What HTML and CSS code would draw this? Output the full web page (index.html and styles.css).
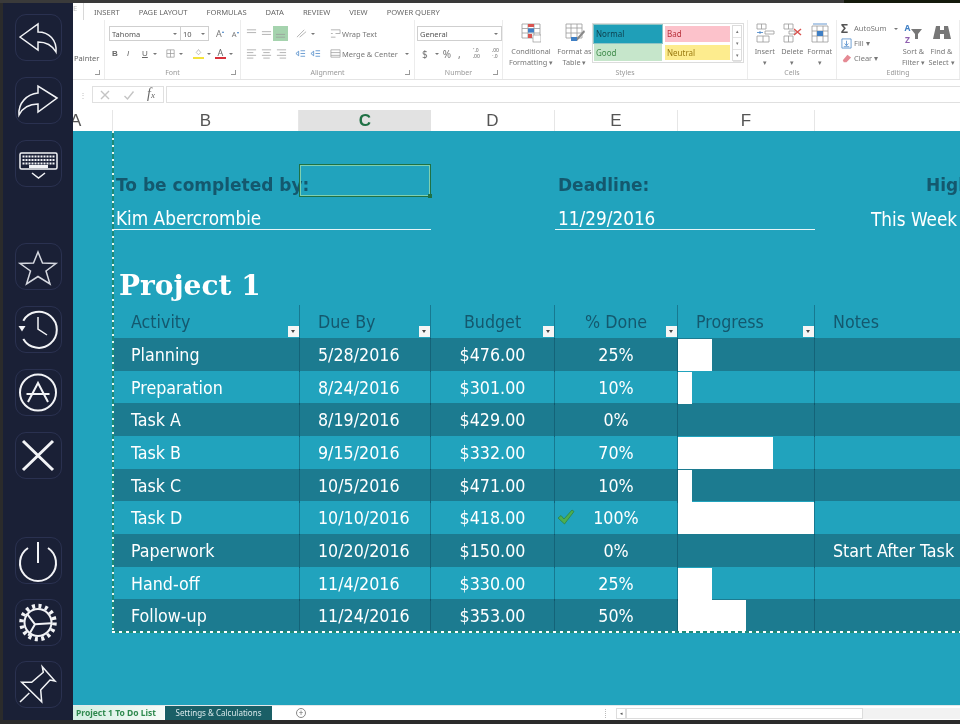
FILE: index.html
```html
<!DOCTYPE html>
<html lang="en">
<head>
    <meta charset="UTF-8">
    <meta name="viewport" content="width=device-width, initial-scale=1.0">
    <title>Project 1 To Do List</title>
    <link rel="stylesheet" href="styles.css">
</head>
<body>
<div class="app">
    <nav class="sidebar">
        <div class="side-group">
            <button class="side-btn"><svg viewBox="1 1 45 45"><path d="M5 23 L23 10 V18 C34 18 42 26 41 38 C37 31 31 28 23 28 V36 Z"/></svg></button>
            <button class="side-btn"><svg viewBox="1 1 45 45"><path d="M42 21 L23 9 V16 C12 17 3 26 4 38 C8 30 14 27 23 27 V35 Z"/></svg></button>
            <button class="side-btn"><svg viewBox="1 1 45 45">
                <rect x="5" y="13" width="37" height="16" rx="1.5"/>
                <path class="keys" d="M7.5 16.5 H39.5 M7.5 20 H39.5 M7.5 23.5 H39.5"/>
                <path class="thick" d="M14 26.5 H33"/>
                <path d="M17 33 L23.5 38 L30 33"/>
            </svg></button>
        </div>
        <div class="side-group">
            <button class="side-btn"><svg viewBox="1 1 45 45"><path class="soft" d="M23 9 L27.5 20 L41 20.5 L31 28 L35 41 L23 33.5 L11.5 41 L15.5 28 L5 20.5 L18.5 20 Z"/></svg></button>
            <button class="side-btn"><svg viewBox="1 1 45 45">
                <path class="med" d="M8.3 14.7 A18 18 0 1 1 8.3 33"/>
                <path class="solid" d="M3.5 20 H10.5 L7 25.5 Z"/>
                <path d="M23 11 V23 L32 29"/>
            </svg></button>
            <button class="side-btn"><svg viewBox="1 1 45 45">
                <circle class="med" cx="23" cy="23.5" r="18"/>
                <path class="med" d="M13 33 L23 14 L33 33 M11.5 25 H34.5"/>
            </svg></button>
            <button class="side-btn"><svg viewBox="1 1 45 45"><path class="thick" d="M8 9 L38 38 M38 9 L8 38"/></svg></button>
        </div>
        <div class="side-group tight">
            <button class="side-btn"><svg viewBox="1 1 45 45">
                <path class="med" d="M13 11 A18 18 0 1 0 33 11"/>
                <path class="med" d="M23 5 V26"/>
            </svg></button>
            <button class="side-btn"><svg viewBox="1 1 45 45">
                <circle class="teeth" cx="23" cy="23.5" r="16.5"/>
                <circle class="med" cx="23" cy="23.5" r="13.5"/>
                <path class="med" d="M20 25.3 L11.7 14.3 M20 25.3 L36 24.3 M20 25.3 L13.3 36.7"/>
            </svg></button>
            <button class="side-btn"><svg viewBox="1 1 45 45">
                <path d="M27.3 5.7 L40 20 L35 19 L25.7 29 L26.7 40.7 L6.7 21.3 L16.7 21.3 L28.3 11.3 Z"/>
                <path d="M14.3 32 L5 41"/>
            </svg></button>
        </div>
    </nav>

    <main class="main">
        <div class="tabs">
            <span class="tab-home">E</span>
            <span>INSERT</span><span>PAGE LAYOUT</span><span>FORMULAS</span><span>DATA</span><span>REVIEW</span><span>VIEW</span><span>POWER QUERY</span>
        </div>

        <div class="ribbon">
            <section class="group g-clip">
                <div class="group-body"><span class="painter">Painter</span></div>
                <div class="group-label"><i class="launcher"></i></div>
            </section>

            <section class="group g-font">
                <div class="group-body tools">
                    <div class="tool-row">
                        <span class="combo c-font">Tahoma<i class="caret"></i></span><span class="combo c-size">10<i class="caret"></i></span>
                        <span class="grow-a">A<sup>▴</sup></span><span class="shrink-a">A<sup>▾</sup></span>
                    </div>
                    <div class="tool-row fmt">
                        <b>B</b><em>I</em><u>U</u><i class="caret"></i>
                        <svg class="ico" viewBox="0 0 12 12"><path class="ln" d="M2 2 H10 V10 H2 Z M6 2 V10 M2 6 H10"/></svg><i class="caret"></i>
                        <span class="paint"><svg class="ico" viewBox="0 0 12 12"><path class="ln" d="M3 6 L6 2 L9 6 L6 9 Z"/></svg><i class="swatch s-yellow"></i></span><i class="caret"></i>
                        <span class="paint p2"><span class="font-a">A</span><i class="swatch s-red"></i></span><i class="caret"></i>
                    </div>
                </div>
                <div class="group-label">Font<i class="launcher"></i></div>
            </section>

            <section class="group g-align">
                <div class="group-body tools">
                    <div class="tool-row">
                        <svg class="ico" viewBox="0 0 12 12"><path class="ln" d="M1 2 H11 M1 5 H11"/></svg>
                        <svg class="ico" viewBox="0 0 12 12"><path class="ln" d="M1 4 H11 M1 7 H11"/></svg>
                        <span class="active"><svg class="ico" viewBox="0 0 12 12"><path class="ln" d="M1 7 H11 M1 10 H11"/></svg></span>
                        <svg class="ico orient" viewBox="0 0 12 12"><path class="ln" d="M1 10 L9 2 M4 10 L11 4"/></svg><i class="caret"></i>
                        <span class="with-ico wrap"><svg class="ico" viewBox="0 0 12 12"><path class="ln" d="M1 2 H11 V6 H6 M1 6 H3 M1 10 H6"/></svg>Wrap Text</span>
                    </div>
                    <div class="tool-row">
                        <svg class="ico" viewBox="0 0 12 12"><path class="ln" d="M1 2 H11 M1 5 H8 M1 8 H11 M1 11 H8"/></svg>
                        <svg class="ico" viewBox="0 0 12 12"><path class="ln" d="M1 2 H11 M2.5 5 H9.5 M1 8 H11 M2.5 11 H9.5"/></svg>
                        <svg class="ico" viewBox="0 0 12 12"><path class="ln" d="M1 2 H11 M4 5 H11 M1 8 H11 M4 11 H11"/></svg>
                        <svg class="ico orient" viewBox="0 0 12 12"><path class="ln-blue" d="M1 6 L4 3.5 V8.5 Z M6 3 H11 M6 6 H11 M6 9 H11"/></svg>
                        <svg class="ico" viewBox="0 0 12 12"><path class="ln-blue" d="M1 6 L4 3.5 V8.5 Z M6 3 H11 M6 6 H11 M6 9 H11"/></svg>
                        <span class="with-ico merge"><svg class="ico" viewBox="0 0 12 12"><path class="ln" d="M1 2 H11 V10 H1 Z M1 5 H11 M1 8 H11"/></svg>Merge &amp; Center<i class="caret"></i></span>
                    </div>
                </div>
                <div class="group-label">Alignment<i class="launcher"></i></div>
            </section>

            <section class="group g-number">
                <div class="group-body tools">
                    <div class="tool-row"><span class="combo c-number">General<i class="caret"></i></span></div>
                    <div class="tool-row num-fmt">
                        <span class="big">$</span><i class="caret"></i><span class="big pct">%</span><span class="big">,</span>
                        <span class="dec">⁺.0<br>.00</span><span class="dec">.00<br>⁻.0</span>
                    </div>
                </div>
                <div class="group-label">Number<i class="launcher"></i></div>
            </section>

            <section class="group g-styles">
                <div class="group-body styles-body">
                    <div class="big-tool t-cond">
                        <svg viewBox="0 0 20 20" class="big-ico"><path class="ln" d="M1 1 H19 V15 H1 Z M7 1 V15 M13 1 V15 M1 5.5 H19 M1 10 H19"/><rect x="7" y="1" width="6" height="3" fill="#d9534f"/><rect x="7" y="5.5" width="6" height="4" fill="#3f7fc4"/><rect x="7" y="11" width="4" height="4" fill="#d9534f"/><rect x="12" y="12" width="8" height="7" fill="#fff" stroke="#888" stroke-width=".6"/></svg>
                        <span>Conditional<br>Formatting ▾</span>
                    </div>
                    <div class="big-tool t-table">
                        <svg viewBox="0 0 20 20" class="big-ico"><path class="ln" d="M1 1 H17 V15 H1 Z M6 1 V15 M12 1 V15 M1 5 H17 M1 10 H17"/><path d="M10 17 L19 7 L20 9 L12 18 Z" fill="#888"/><rect x="6" y="14" width="6" height="4" fill="#3f7fc4"/></svg>
                        <span>Format as<br>Table ▾</span>
                    </div>
                    <div class="gallery">
                        <div class="style-grid">
                            <span class="st-normal">Normal</span><span class="st-bad">Bad</span>
                            <span class="st-good">Good</span><span class="st-neutral">Neutral</span>
                        </div>
                        <div class="gallery-scroll"><i>▴</i><i>▾</i><i>▾</i></div>
                    </div>
                </div>
                <div class="group-label">Styles</div>
            </section>

            <section class="group g-cells">
                <div class="group-body cells-body">
                    <div class="big-tool">
                        <svg viewBox="0 0 20 20" class="big-ico"><path class="ln" d="M2 1 H11 V6 H2 Z M6.5 1 V6 M2 13 H14 V19 H2 Z M8 13 V19 M10 8 H19 V11 H10 Z"/><path class="ln-blue" d="M2 9.5 H8 M5 8 V11"/></svg>
                        <span>Insert<br>▾</span>
                    </div>
                    <div class="big-tool">
                        <svg viewBox="0 0 20 20" class="big-ico"><path class="ln" d="M2 1 H11 V6 H2 Z M6.5 1 V6 M2 13 H11 V19 H2 Z M6.5 13 V19 M7 8 H13 V11 H7 Z"/><path class="ln-red" d="M12 6 L19 12 M19 6 L12 12"/></svg>
                        <span>Delete<br>▾</span>
                    </div>
                    <div class="big-tool">
                        <svg viewBox="0 0 20 20" class="big-ico"><path class="ln" d="M2 3 H18 V19 H2 Z M2 8 H18 M7 3 V19 M13 3 V19 M2 13 H18"/><rect x="7" y="8" width="6" height="5" fill="#3f7fc4"/><path class="ln-blue" d="M3 1 H17"/></svg>
                        <span>Format<br>▾</span>
                    </div>
                </div>
                <div class="group-label">Cells</div>
            </section>

            <section class="group g-edit">
                <div class="group-body edit-body">
                    <div class="edit-list">
                        <span><em class="sigma">Σ</em>AutoSum<i class="caret far"></i></span>
                        <span><svg class="ico" viewBox="0 0 12 12"><path class="ln-blue" d="M1 1 H11 V11 H1 Z M6 3 V8 M4 6 L6 8.5 L8 6 M3 9.5 H9"/></svg>Fill ▾</span>
                        <span><svg class="ico" viewBox="0 0 12 12"><path d="M2 8 L7 2 L11 5 L6 10 H3 Z" fill="#e58a94"/></svg>Clear ▾</span>
                    </div>
                    <div class="big-tool t-sort">
                        <span class="sort-ico">
                            <span class="az"><span class="az-a">A</span><span class="az-z">Z</span></span>
                            <svg viewBox="0 0 11 10" class="funnel"><path d="M0 0 H11 L7 5 V10 H4 V5 Z" fill="#777"/></svg>
                        </span>
                        <span>Sort &amp;<br>Filter ▾</span>
                    </div>
                    <div class="big-tool t-find">
                        <svg viewBox="0 0 20 20" class="big-ico"><path d="M4 3 H8 V7 H12 V3 H16 L19 16 H12 V11 H8 V16 H1 Z" fill="#777"/></svg>
                        <span>Find &amp;<br>Select ▾</span>
                    </div>
                </div>
                <div class="group-label">Editing</div>
            </section>
        </div>

        <div class="formula-bar">
            <span class="grip">⋮</span>
            <div class="fx-box">
                <svg class="fx-ico" viewBox="0 0 12 12"><path class="ln-pale" d="M2 2 L10 10 M10 2 L2 10"/></svg>
                <svg class="fx-ico" viewBox="0 0 12 12"><path class="ln-pale" d="M1.5 7 L4.5 10 L10.5 2.5"/></svg>
                <span class="fx">f<sub>x</sub></span>
            </div>
            <div class="fx-input"></div>
        </div>

        <div class="col-heads cols">
            <span class="col-a">A</span><span>B</span><span class="current">C</span><span>D</span><span>E</span><span>F</span><span class="col-g">G</span>
        </div>

        <div class="sheet">
            <div class="print-area">
                <div class="top-row cols">
                    <span class="label">To be completed by:</span>
                    <span class="selected"><i class="handle"></i></span>
                    <span></span>
                    <span class="label">Deadline:</span>
                    <span></span>
                    <span class="label high">High</span>
                </div>
                <div class="top-row cols values">
                    <span class="value">Kim Abercrombie</span>
                    <span class="value"></span>
                    <span></span>
                    <span class="value">11/29/2016</span>
                    <span class="value"></span>
                    <span class="week">This Week</span>
                </div>
                <h1>Project 1</h1>

                <div class="row head cols">
                    <span class="cell pad">Activity<i class="filter"></i></span>
                    <span class="cell pad">Due By<i class="filter"></i></span>
                    <span class="cell mid">Budget<i class="filter"></i></span>
                    <span class="cell mid">% Done<i class="filter"></i></span>
                    <span class="cell pad">Progress<i class="filter"></i></span>
                    <span class="cell pad">Notes</span>
                </div>
                <div class="row dark cols">
                    <span class="cell pad">Planning</span><span class="cell pad">5/28/2016</span><span class="cell mid">$476.00</span><span class="cell mid">25%</span>
                    <span class="cell bar-cell"><i class="bar" style="width:25%"></i></span><span class="cell pad"></span>
                </div>
                <div class="row cols">
                    <span class="cell pad">Preparation</span><span class="cell pad">8/24/2016</span><span class="cell mid">$301.00</span><span class="cell mid">10%</span>
                    <span class="cell bar-cell"><i class="bar" style="width:10%"></i></span><span class="cell pad"></span>
                </div>
                <div class="row dark cols">
                    <span class="cell pad">Task A</span><span class="cell pad">8/19/2016</span><span class="cell mid">$429.00</span><span class="cell mid">0%</span>
                    <span class="cell bar-cell"></span><span class="cell pad"></span>
                </div>
                <div class="row cols">
                    <span class="cell pad">Task B</span><span class="cell pad">9/15/2016</span><span class="cell mid">$332.00</span><span class="cell mid">70%</span>
                    <span class="cell bar-cell"><i class="bar" style="width:70%"></i></span><span class="cell pad"></span>
                </div>
                <div class="row dark cols">
                    <span class="cell pad">Task C</span><span class="cell pad">10/5/2016</span><span class="cell mid">$471.00</span><span class="cell mid">10%</span>
                    <span class="cell bar-cell"><i class="bar" style="width:10%"></i></span><span class="cell pad"></span>
                </div>
                <div class="row cols">
                    <span class="cell pad">Task D</span><span class="cell pad">10/10/2016</span><span class="cell mid">$418.00</span>
                    <span class="cell mid"><svg class="check" viewBox="0 0 18 16"><path d="M1 9 L4 6.5 L7 10 L15 1 L17 2.5 L7.5 15 Z"/></svg>100%</span>
                    <span class="cell bar-cell"><i class="bar" style="width:100%"></i></span><span class="cell pad"></span>
                </div>
                <div class="row dark cols">
                    <span class="cell pad">Paperwork</span><span class="cell pad">10/20/2016</span><span class="cell mid">$150.00</span><span class="cell mid">0%</span>
                    <span class="cell bar-cell"></span><span class="cell pad">Start After Task</span>
                </div>
                <div class="row cols">
                    <span class="cell pad">Hand-off</span><span class="cell pad">11/4/2016</span><span class="cell mid">$330.00</span><span class="cell mid">25%</span>
                    <span class="cell bar-cell"><i class="bar" style="width:25%"></i></span><span class="cell pad"></span>
                </div>
                <div class="row dark cols">
                    <span class="cell pad">Follow-up</span><span class="cell pad">11/24/2016</span><span class="cell mid">$353.00</span><span class="cell mid">50%</span>
                    <span class="cell bar-cell"><i class="bar" style="width:50%"></i></span><span class="cell pad"></span>
                </div>
            </div>
        </div>

        <div class="sheet-tabs">
            <span class="sheet-tab on">Project 1 To Do List</span>
            <span class="sheet-tab other">Settings &amp; Calculations</span>
            <span class="add-sheet">+</span>
            <span class="split"></span>
            <span class="scroll-btn">◂</span>
            <span class="scroll-thumb"></span>
            <span class="scroll-rest"></span>
        </div>
    </main>
</div>
</body>
</html>
```

FILE: styles.css
```css
* {
    box-sizing: border-box;
}
html, body {
    margin: 0;
    height: 100%;
    overflow: hidden;
}
body {
    background: #2b2b2b linear-gradient(90deg, #3a3a3a 0, #3a3a3a 844px, #141a0c 844px) no-repeat 0 0 / 100% 3px;
    font-family: "Noto Sans", sans-serif;
}
.app {
    display: flex;
    height: 717px;
    margin-top: 3px;
    padding-left: 3px;
    filter: blur(.35px);
}

/* left launcher */
.sidebar {
    width: 70px;
    flex: none;
    background: #1a2036;
    padding: 11px 0 0 12px;
}
.side-group {
    display: flex;
    flex-direction: column;
    gap: 16px;
    margin-bottom: 56px;
}
.side-group:nth-child(2) {
    margin-bottom: 58px;
}
.side-group.tight {
    gap: 15px;
}
.side-btn {
    width: 47px;
    height: 47px;
    padding: 0;
    background: none;
    border: 1px solid #2a3150;
    border-radius: 11px;
}
.side-btn svg {
    display: block;
    width: 45px;
    height: 45px;
    fill: none;
    stroke: #f2f3f6;
    stroke-width: 1.5;
}
.side-btn .soft {
    stroke: #d5d8e0;
}
.side-btn .med {
    stroke-width: 2;
}
.side-btn .thick {
    stroke-width: 3;
}
.side-btn .keys {
    stroke-width: 2;
    stroke-dasharray: 2 1;
}
.side-btn .solid {
    fill: #f2f3f6;
    stroke: none;
}
.side-btn .teeth {
    stroke-width: 4.5;
    stroke-dasharray: 3 3.48;
}

.main {
    flex: 1;
    min-width: 0;
    display: flex;
    flex-direction: column;
    background: #fff;
    overflow: hidden;
}

/* ribbon */
.tabs {
    height: 17px;
    flex: none;
    display: flex;
    align-items: center;
    gap: 19px;
    font-size: 7.6px;
    color: #666;
    white-space: nowrap;
}
.tabs .tab-home {
    width: 11px;
    height: 17px;
    margin-right: -9px;
    border-right: 1px solid #d8d8d8;
    color: #bbb;
}
.ribbon {
    height: 60px;
    flex: none;
    display: flex;
    color: #666;
    font-size: 7.5px;
    border-bottom: 1px solid #e4e4e4;
    white-space: nowrap;
}
.group {
    display: flex;
    flex-direction: column;
    border-right: 1px solid #ececec;
    height: 59px;
}
.group-body {
    flex: 1;
    min-height: 0;
}
.group-label {
    height: 11px;
    position: relative;
    text-align: center;
    font-size: 7px;
    line-height: 10px;
    color: #999;
}
.launcher {
    position: absolute;
    right: 4px;
    top: 2px;
    width: 5px;
    height: 5px;
    border-right: 1px solid #999;
    border-bottom: 1px solid #999;
}
.g-clip { width: 32px; }
.g-font { width: 136px; }
.g-align { width: 174px; }
.g-number { width: 88px; }
.g-styles { width: 245px; }
.g-cells { width: 89px; }
.g-edit { width: 123px; }
.painter {
    display: block;
    margin-top: 33px;
    margin-left: 1px;
    font-size: 7.5px;
}
.tools {
    display: flex;
    flex-direction: column;
    gap: 6px;
    padding: 6px 0 0 4px;
}
.tool-row {
    height: 15px;
    display: flex;
    align-items: center;
}
.tool-row:last-child {
    margin-top: -1px;
}
.combo {
    height: 15px;
    display: flex;
    align-items: center;
    justify-content: space-between;
    padding: 0 3px 0 2px;
    background: #fff;
    border: 1px solid #cfcfcf;
    color: #555;
    font-size: 7.5px;
}
.c-font { width: 72px; }
.c-size { width: 29px; margin-left: -1px; }
.c-number { width: 85px; margin-left: -2px; }
.caret {
    width: 0;
    height: 0;
    flex: none;
    border-left: 2px solid transparent;
    border-right: 2px solid transparent;
    border-top: 2px solid #777;
}
.grow-a, .shrink-a {
    margin-left: 7px;
    font-size: 9px;
    color: #777;
}
.shrink-a { font-size: 7.5px; margin-left: 8px; }
.grow-a sup, .shrink-a sup {
    font-size: 4px;
    color: #3f7fc4;
}
.ico {
    width: 11px;
    height: 11px;
    flex: none;
}
.ln, .ln-blue, .ln-red, .ln-pale {
    fill: none;
    stroke: #999;
    stroke-width: .8;
}
.ln-blue { stroke: #3f7fc4; }
.ln-red { stroke: #d9534f; stroke-width: 1.5; }
.ln-pale { stroke: #c4c4c4; stroke-width: 1.4; }
.fmt {
    padding-left: 3px;
    color: #666;
}
.fmt b, .fmt em, .fmt u {
    flex: none;
    width: 15px;
    font-size: 8px;
    font-family: "Liberation Sans", sans-serif;
}
.fmt u { width: 8px; }
.fmt .caret { margin-left: 3px; }
.fmt > .ico { margin-left: 8px; }
.paint {
    flex: none;
    display: flex;
    flex-direction: column;
    align-items: center;
    width: 11px;
    margin-left: 10px;
}
.paint.p2 { margin-left: 4px; }
.paint .ico {
    height: 9px;
}
.font-a {
    height: 9px;
    line-height: 9px;
    font-size: 9px;
    color: #666;
}
.swatch {
    width: 11px;
    height: 2.5px;
}
.s-yellow { background: #f4e23c; }
.s-red { background: #d8303a; }
.g-align .tool-row {
    gap: 4px;
}
.g-align .tools {
    padding-left: 5px;
}
.active {
    display: flex;
    justify-content: center;
    align-items: center;
    width: 15px;
    height: 15px;
    background: #a5d3ae;
    margin-left: -3px;
}
.orient {
    margin-left: 4px;
}
.with-ico {
    display: flex;
    align-items: center;
    gap: 1px;
    font-size: 7.5px;
    color: #777;
}
.wrap { margin-left: 11px; }
.merge { margin-left: 5px; }
.merge .caret { margin-left: 6px; }
.num-fmt {
    gap: 7px;
    padding-left: 3px;
}
.num-fmt .big {
    font-size: 10px;
    color: #777;
}
.num-fmt .pct {
    margin-left: -3px;
}
.num-fmt .dec {
    font-size: 5px;
    line-height: 5.5px;
    color: #666;
    margin-left: 5px;
}
.styles-body {
    display: flex;
    padding-top: 3px;
}
.big-tool {
    display: flex;
    flex-direction: column;
    align-items: center;
    text-align: center;
    line-height: 11px;
    font-size: 7.3px;
    color: #777;
}
.big-ico {
    width: 20px;
    height: 20px;
    flex: none;
    margin-bottom: 3px;
}
.t-cond { width: 50px; margin-left: 3px; }
.t-table { width: 37px; }
.gallery {
    display: flex;
    margin-left: -1px;
    width: 152px;
    height: 40px;
    border: 1px solid #dcdcdc;
    padding: 1px;
}
.style-grid {
    flex: 1;
    display: grid;
    grid-template-columns: 68px 1fr;
    grid-template-rows: 1fr 1fr;
    gap: 1px 3px;
}
.style-grid span {
    padding-left: 2px;
    line-height: 17px;
    font-size: 8px;
}
.st-normal { background: #1f9fb8; color: #0d3f4d; outline: 1px solid #8fc4c4; }
.st-bad { background: #fcc2cb; color: #b8303a; margin: 1px 0; line-height: 15px !important; }
.st-good { background: #c6e6cb; color: #3f8a4a; }
.st-neutral { background: #fdec8e; color: #9a7a10; margin: 1px 0; line-height: 15px !important; }
.gallery-scroll {
    width: 10px;
    margin-left: 2px;
    display: flex;
    flex-direction: column;
    border: 1px solid #dcdcdc;
}
.gallery-scroll i {
    flex: 1;
    font-size: 5px;
    line-height: 11px;
    font-style: normal;
    text-align: center;
    color: #777;
    border-bottom: 1px solid #e4e4e4;
}
.cells-body {
    display: flex;
    padding: 3px 0 0 3px;
}
.cells-body .big-tool {
    width: 27.5px;
}
.edit-body {
    display: flex;
    padding: 1px 0 0 4px;
}
.edit-list {
    display: flex;
    flex-direction: column;
    width: 59px;
    line-height: 15px;
    font-size: 7.5px;
    color: #777;
}
.edit-list span {
    display: flex;
    align-items: center;
    gap: 2px;
}
.sigma {
    width: 11px;
    font-style: normal;
    font-size: 12px;
    font-weight: 700;
    color: #555;
}
.far { margin-left: 6px; }
.t-sort { width: 27px; padding-top: 2px; }
.t-find { width: 29px; padding-top: 2px; }
.sort-ico {
    display: flex;
    align-items: center;
    gap: 1px;
    height: 21px;
    margin-bottom: 2px;
}
.az {
    display: flex;
    flex-direction: column;
    font-size: 8.5px;
    line-height: 11.6px;
    font-weight: 700;
}
.az-a { color: #3f7fc4; }
.az-z { color: #9060b0; }
.funnel {
    width: 11px;
    height: 10px;
}

.formula-bar {
    height: 30px;
    flex: none;
    display: flex;
    align-items: flex-start;
    background: #fff;
    padding-top: 6px;
}
.grip {
    width: 19px;
    text-align: center;
    font-size: 8px;
    line-height: 17px;
    color: #bbb;
}
.fx-box {
    width: 72px;
    height: 17px;
    display: flex;
    align-items: center;
    gap: 12px;
    padding-left: 6px;
    border: 1px solid #e0e0e0;
}
.fx-ico {
    width: 12px;
    height: 12px;
}
.fx {
    font-family: "Liberation Serif", serif;
    font-style: italic;
    font-size: 14px;
    line-height: 14px;
    color: #666;
}
.fx sub {
    font-size: 9px;
    vertical-align: baseline;
}
.fx-input {
    flex: 1;
    height: 17px;
    margin-left: 2px;
    border: 1px solid #e0e0e0;
    border-right: none;
}

/* shared column template */
.cols {
    display: grid;
    grid-template-columns: 186px 132px 124px 123px 137px 1fr;
}
.col-heads {
    grid-template-columns: 40px 186px 132px 124px 123px 137px 1fr;
    height: 21px;
    flex: none;
    line-height: 21px;
    text-align: center;
    font-family: "Liberation Sans", sans-serif;
    font-size: 17px;
    color: #555;
    background: #fff;
}
.col-heads span {
    border-right: 1px solid #e6e6e6;
}
.col-heads .col-a {
    text-align: left;
    text-indent: -3px;
}
.col-heads .current {
    background: #e2e2e2;
    color: #1f7145;
    font-weight: 700;
    border-bottom: 2px solid #1f7145;
    border-right: none;
}
.col-heads .col-g {
    border: none;
    text-indent: 290px;
}

/* worksheet */
.sheet {
    flex: 1;
    min-height: 0;
    background: #21a3bd;
    padding-left: 40px;
    overflow: hidden;
    white-space: nowrap;
}
.print-area {
    position: relative;
    width: 960px;
    height: 501px;
    padding-top: 33px;
    color: #fff;
    font-family: "DejaVu Sans", sans-serif;
    font-stretch: condensed;
    font-size: 17.7px;
}
.print-area::before,
.print-area::after {
    content: "";
    position: absolute;
    left: -1px;
    z-index: 1;
}
.print-area::before {
    top: 0;
    bottom: 0;
    width: 2px;
    background: repeating-linear-gradient(180deg, #e8f6ee 0 2px, #1d8a78 2px 7px);
}
.print-area::after {
    bottom: -1px;
    right: 0;
    height: 2px;
    background: repeating-linear-gradient(90deg, #fff 0 3px, #1d8a78 3px 7px);
}
.top-row {
    height: 33px;
    align-items: center;
}
.top-row .label {
    padding-left: 3px;
    padding-top: 8px;
    font-family: "DejaVu Sans", sans-serif;
    font-stretch: normal;
    font-weight: 700;
    font-size: 17px;
    color: #14586e;
}
.top-row .selected {
    position: relative;
    height: 33px;
    border: 1px solid #1f7145;
    outline: 1px solid #7fd0b0;
    outline-offset: -2px;
}
.handle {
    position: absolute;
    right: -2px;
    bottom: -2px;
    width: 4px;
    height: 4px;
    background: #1f7145;
}
.top-row .label.high {
    padding-left: 111px;
}
.values {
    height: 33px;
    font-size: 18.8px;
}
.values .value {
    height: 33px;
    line-height: 44px;
    padding-left: 3px;
    border-bottom: 1px solid #e6f5f8;
}
.values .week {
    padding: 11px 0 0 56px;
}
.print-area h1 {
    margin: 40px 0 0;
    height: 35px;
    padding-left: 6px;
    line-height: 32px;
    font-family: "DejaVu Serif", serif;
    font-stretch: normal;
    font-weight: 700;
    font-size: 28px;
}
.row {
    height: 32.67px;
}
.row.head {
    color: #14586e;
    height: 33px;
}
.row.dark {
    background: #1c7b90;
}
.cell {
    position: relative;
    display: block;
    height: 100%;
    line-height: 34px;
    border-right: 1px solid rgba(10, 70, 90, .45);
}
.cell:first-child {
    margin-right: -1px;
}
.cell.pad {
    padding-left: 18px;
}
.cell:nth-child(2).pad {
    padding-left: 19px;
}
.cell.mid {
    text-align: center;
}
.bar-cell {
    padding: 1px 0;
}
.bar {
    display: block;
    height: 100%;
    background: #fff;
}
.filter {
    position: absolute;
    right: 0;
    bottom: 2px;
    width: 11px;
    height: 11px;
    background: #f5f5f5;
}
.filter::after {
    content: "";
    position: absolute;
    left: 3px;
    top: 4px;
    border-left: 2.5px solid transparent;
    border-right: 2.5px solid transparent;
    border-top: 3px solid #444;
}
.check {
    position: absolute;
    left: 2px;
    top: 8px;
    width: 18px;
    height: 16px;
    fill: #4caf50;
    stroke: #2f7d3a;
    stroke-width: .7;
}

/* sheet tabs */
.sheet-tabs {
    height: 15px;
    flex: none;
    display: flex;
    align-items: center;
    background: #fff;
    border-top: 1px solid #e2e8ea;
    font-size: 8px;
    white-space: nowrap;
}
.sheet-tab {
    height: 14px;
    line-height: 14px;
}
.sheet-tab.on {
    width: 91px;
    padding-left: 3px;
    font-size: 8.5px;
    font-weight: 700;
    color: #2f8a4f;
    background: linear-gradient(90deg, #d2efe2, #f6fbf8);
}
.sheet-tab.other {
    width: 107px;
    margin-left: 1px;
    text-align: center;
    color: #d8e8ea;
    background: #1a5f66;
}
.add-sheet {
    width: 10px;
    height: 10px;
    margin-left: 24px;
    border: 1px solid #888;
    border-radius: 50%;
    text-align: center;
    line-height: 8px;
    color: #666;
}
.split {
    width: 2px;
    height: 9px;
    margin-left: 299px;
    border-left: 1px dotted #bbb;
}
.scroll-btn {
    width: 10px;
    height: 11px;
    margin-left: 9px;
    border: 1px solid #ddd;
    font-size: 5px;
    line-height: 9px;
    text-align: center;
    color: #555;
}
.scroll-thumb {
    width: 237px;
    height: 11px;
    border: 1px solid #dcdcdc;
}
.scroll-rest {
    flex: 1;
    height: 11px;
    background: #f2f2f2;
}
```
